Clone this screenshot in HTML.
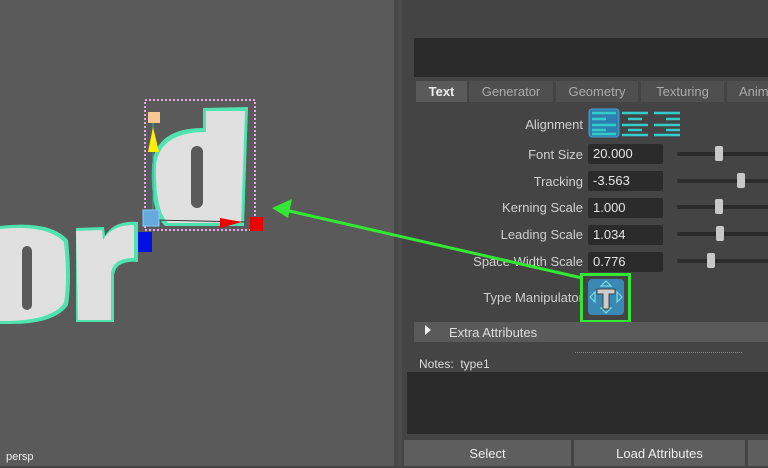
<!DOCTYPE html>
<html><head><style>
*{margin:0;padding:0;box-sizing:border-box}
body{width:768px;height:466px;overflow:hidden;background:#444;font-family:"Liberation Sans",sans-serif;position:relative}
.a{position:absolute}
.lbl{position:absolute;right:185px;color:#d0d0d0;font-size:13px;text-align:right;white-space:nowrap}
.fld{position:absolute;left:588px;width:75px;height:20px;background:#2b2b2b;color:#e6e6e6;font-size:13px;padding:2px 5px;border-radius:2px}
.trk{position:absolute;left:677px;width:100px;height:4px;background:#2b2b2b;border-radius:2px}
.th{position:absolute;width:8px;height:15px;background:#c8c8c8;border-radius:2px}
.tab{position:absolute;top:81px;height:21px;background:#4f4f4f;color:#aaa;font-size:13px;text-align:center;line-height:21px}
.btn{position:absolute;top:440px;height:26px;background:#5e5e5e;color:#eee;font-size:13px;text-align:center;line-height:28px}
</style></head><body>
<div class="a" style="left:0;top:0;width:394px;height:466px;background:#5a5a5a"></div>
<div class="a" style="left:394px;top:0;width:4px;height:466px;background:#464646"></div>
<div class="a" style="left:398px;top:0;width:4px;height:466px;background:#4c4c4c"></div>
<div class="a" style="left:6px;top:451px;color:#eee;font-size:11px">persp</div>
<div class="a" style="left:414px;top:38px;width:360px;height:39px;background:#2b2b2b"></div>
<div class="tab" style="left:416px;width:51px;background:#5a5a5a;color:#eee;font-weight:bold">Text</div>
<div class="tab" style="left:469px;width:84px">Generator</div>
<div class="tab" style="left:556px;width:82px">Geometry</div>
<div class="tab" style="left:641px;width:83px">Texturing</div>
<div class="tab" style="left:727px;width:60px;text-align:left;padding-left:12px">Anim</div>
<div class="lbl" style="top:117px">Alignment</div>
<svg class="a" style="left:588px;top:108px" width="95" height="30">
 <rect x="1" y="1" width="30" height="28" rx="3" fill="#2f7fae" stroke="#4aa0d0"/>
 <g stroke="#3cc" stroke-width="2.5"><line x1="4" y1="5" x2="28" y2="5"/><line x1="4" y1="11" x2="18" y2="11"/><line x1="4" y1="17" x2="28" y2="17"/><line x1="4" y1="22" x2="18" y2="22"/><line x1="4" y1="26" x2="28" y2="26"/>
 <line x1="34" y1="5" x2="60" y2="5"/><line x1="40" y1="11" x2="54" y2="11"/><line x1="34" y1="17" x2="60" y2="17"/><line x1="40" y1="22" x2="54" y2="22"/><line x1="34" y1="27" x2="60" y2="27"/>
 <line x1="66" y1="5" x2="92" y2="5"/><line x1="78" y1="11" x2="92" y2="11"/><line x1="66" y1="17" x2="92" y2="17"/><line x1="78" y1="22" x2="92" y2="22"/><line x1="66" y1="27" x2="92" y2="27"/></g>
</svg>
<div class="lbl" style="top:147px">Font Size</div><div class="fld" style="top:144px">20.000</div><div class="trk" style="top:152px"></div><div class="th" style="left:715px;top:146px"></div>
<div class="lbl" style="top:174px">Tracking</div><div class="fld" style="top:171px">-3.563</div><div class="trk" style="top:179px"></div><div class="th" style="left:737px;top:173px"></div>
<div class="lbl" style="top:200px">Kerning Scale</div><div class="fld" style="top:198px">1.000</div><div class="trk" style="top:205px"></div><div class="th" style="left:715px;top:199px"></div>
<div class="lbl" style="top:227px">Leading Scale</div><div class="fld" style="top:225px">1.034</div><div class="trk" style="top:232px"></div><div class="th" style="left:716px;top:226px"></div>
<div class="lbl" style="top:254px">Space Width Scale</div><div class="fld" style="top:252px">0.776</div><div class="trk" style="top:259px"></div><div class="th" style="left:707px;top:253px"></div>
<div class="lbl" style="top:290px">Type Manipulator</div>
<div class="a" style="left:580px;top:273px;width:51px;height:50px;border:3px solid #33e833"></div>
<svg class="a" style="left:587px;top:278px" width="40" height="38">
 <rect x="1" y="1" width="36" height="36" rx="4" fill="#3a88b4"/>
 <g fill="none" stroke="#7dd" stroke-width="1.2"><path d="M14 8 L19 3 L24 8Z"/><path d="M14 30 L19 35 L24 30Z"/><path d="M8 14 L3 19 L8 24Z"/><path d="M30 14 L35 19 L30 24Z"/></g>
 <path d="M10 11 H28 V16 H22 V31 H16 V16 H10Z" fill="#ccc" stroke="#444" stroke-width="1"/>
</svg>
<div class="a" style="left:414px;top:322px;width:360px;height:20px;background:#5a5a5a;border-radius:2px"></div>
<div class="a" style="left:425px;top:325px;width:0;height:0;border-left:6px solid #eee;border-top:5px solid transparent;border-bottom:5px solid transparent"></div>
<div class="a" style="left:449px;top:325px;color:#ddd;font-size:13px">Extra Attributes</div>
<div class="a" style="left:575px;top:352px;width:167px;border-top:1px dotted #888"></div>
<div class="a" style="left:419px;top:357px;color:#ddd;font-size:12px">Notes:&nbsp; type1</div>
<div class="a" style="left:407px;top:372px;width:361px;height:62px;background:#2b2b2b"></div>
<div class="btn" style="left:404px;width:167px">Select</div>
<div class="btn" style="left:574px;width:171px">Load Attributes</div>
<div class="btn" style="left:748px;width:30px"></div>
<svg class="a" style="left:0;top:0" width="768" height="466">
 <path d="M0 226 Q50 220 68 240 Q72 280 68 305 Q55 324 10 324 L0 324Z" fill="#4fe3b0"/>
 <path d="M0 229 Q46 224 64 242 Q68 280 64 303 Q52 320 8 321 L0 321Z" fill="#e0e0e0"/>
 <rect x="22" y="246" width="10" height="64" rx="5" fill="#5a5a5a"/>
 <path d="M76 228 L104 227 L105 236 Q114 220 138 222 L138 262 Q116 260 114 275 L114 322 L76 322Z" fill="#4fe3b0"/>
 <path d="M76 231 L102 230 L103 240 Q112 225 134 225 L134 258 Q113 258 111 273 L111 320 L78 320Z" fill="#e0e0e0"/>
 <path d="M203 108 L248 107 L244 226 L165 226 Q150 212 152 165 Q156 128 203 128Z" fill="#4fe3b0"/>
 <path d="M206 111 L245 111 L241 223 L168 223 Q155 210 156 165 Q160 132 206 132Z" fill="#e0e0e0"/>
 <rect x="191" y="146" width="12" height="62" rx="6" fill="#5a5a5a"/>
 <rect x="145" y="100" width="110" height="130" fill="none" stroke="#e8a8e8" stroke-width="2" stroke-dasharray="2 2"/>
 <line x1="153" y1="120" x2="153" y2="215" stroke="#3a9" stroke-width="1"/>
 <line x1="153" y1="220" x2="245" y2="222" stroke="#333" stroke-width="1"/>
 <rect x="148" y="112" width="12" height="11" fill="#f8c890"/>
 <path d="M153 127 L159 152 L148 152Z" fill="#ffee00"/>
 <rect x="143" y="210" width="16" height="16" fill="#6ad" stroke="#8cf"/>
 <rect x="138" y="232" width="14" height="20" fill="#0010e0"/>
 <path d="M220 218 L242 222 L220 228Z" fill="#e00"/>
 <rect x="250" y="217" width="13" height="14" fill="#e00"/>
 <line x1="582" y1="278" x2="285" y2="210" stroke="#33e833" stroke-width="3"/>
 <path d="M272 208 L292 199 L288 218Z" fill="#33e833"/>
</svg>
</body></html>
